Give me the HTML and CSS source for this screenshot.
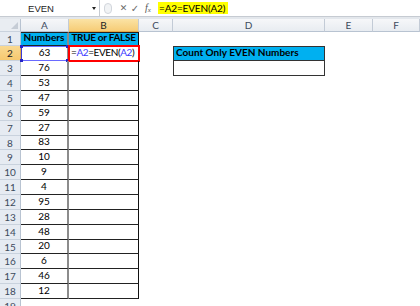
FILE: index.html
```html
<!DOCTYPE html>
<html>
<head>
<meta charset="utf-8">
<link rel="stylesheet" href="styles.css">
</head>
<body>
<div class="fbar">
  <div class="namebox"><span class="nb-text">EVEN</span><span class="nb-arrow"></span></div>
  <div class="fbtns">
    <span class="grip"></span>
    <span class="ico x">✕</span>
    <span class="ico ok">✓</span>
    <span class="ico fx">f<sub>x</sub></span>
  </div>
  <div class="formula"><span class="hl">=A2=EVEN(A2)</span></div>
</div>
<div class="strip"></div>
<div class="sheet">
  <div class="row hdr">
    <div class="rh corner"><span class="tri"></span></div>
    <div class="ch ca">A</div>
    <div class="ch cb sel">B</div>
    <div class="ch cc">C</div>
    <div class="ch cd">D</div>
    <div class="ch ce">E</div>
    <div class="ch cf">F</div>
  </div>
  <div class="row r14">
    <div class="rh">1</div>
    <div class="c ca t th top">Numbers</div>
    <div class="c cb t tb th top">TRUE or FALSE</div>
  </div>
  <div class="row">
    <div class="rh rsel">2</div>
    <div class="c ca t ref">63<i class="h tl"></i><i class="h tr"></i><i class="h bl"></i><i class="h br"></i></div>
    <div class="c cb t tb active"><span class="fm">=<span class="blu">A2</span>=EVEN(<span class="blu">A2</span>)</span></div>
    <div class="c cc"></div>
    <div class="c cd box boxh">Count Only EVEN Numbers</div>
  </div>
  <div class="row">
    <div class="rh">3</div>
    <div class="c ca t">76</div>
    <div class="c cb t tb"></div>
    <div class="c cc"></div>
    <div class="c cd box"></div>
  </div>
  <div class="row"><div class="rh">4</div><div class="c ca t">53</div><div class="c cb t tb"></div></div>
  <div class="row"><div class="rh">5</div><div class="c ca t">47</div><div class="c cb t tb"></div></div>
  <div class="row"><div class="rh">6</div><div class="c ca t">59</div><div class="c cb t tb"></div></div>
  <div class="row"><div class="rh">7</div><div class="c ca t">27</div><div class="c cb t tb"></div></div>
  <div class="row r14"><div class="rh">8</div><div class="c ca t">83</div><div class="c cb t tb"></div></div>
  <div class="row"><div class="rh">9</div><div class="c ca t">10</div><div class="c cb t tb"></div></div>
  <div class="row"><div class="rh">10</div><div class="c ca t">9</div><div class="c cb t tb"></div></div>
  <div class="row"><div class="rh">11</div><div class="c ca t">4</div><div class="c cb t tb"></div></div>
  <div class="row"><div class="rh">12</div><div class="c ca t">95</div><div class="c cb t tb"></div></div>
  <div class="row"><div class="rh">13</div><div class="c ca t">28</div><div class="c cb t tb"></div></div>
  <div class="row"><div class="rh">14</div><div class="c ca t">48</div><div class="c cb t tb"></div></div>
  <div class="row r14"><div class="rh">15</div><div class="c ca t">20</div><div class="c cb t tb"></div></div>
  <div class="row"><div class="rh">16</div><div class="c ca t">6</div><div class="c cb t tb"></div></div>
  <div class="row"><div class="rh">17</div><div class="c ca t">46</div><div class="c cb t tb"></div></div>
  <div class="row"><div class="rh">18</div><div class="c ca t">12</div><div class="c cb t tb"></div></div>
  <div class="row"><div class="rh">19</div><div class="c ca"></div></div>
</div>
</body>
</html>
```
FILE: styles.css
```css
* { box-sizing: border-box; }
html, body { margin: 0; padding: 0; background: #fff; }
body {
  width: 420px; height: 306px; overflow: hidden;
  font-family: Lato, "Liberation Sans", sans-serif;
  font-size: 10px; color: #000;
}
.fbar {
  display: flex; height: 17px; background: #fff;
}
.namebox {
  width: 100px; display: flex; align-items: center; position: relative;
  border-right: 1px solid #c6cbd2; border-bottom: 1px solid #c6cbd2;
}
.nb-text { flex: 1; text-align: center; font-family: "Liberation Sans", sans-serif; font-size: 9.5px; color: #222; padding-right: 10px; }
.nb-arrow {
  width: 0; height: 0; margin-right: 3px;
  border-left: 2.5px solid transparent; border-right: 2.5px solid transparent; border-top: 3px solid #222;
}
.fbtns {
  width: 57px; display: flex; align-items: center; background: #fff;
  border-bottom: 1px solid #c6cbd2;
}
.grip {
  width: 8px; height: 11px; margin-left: 4px; margin-right: 6px;
  border: 1px solid #d2d6dc; border-radius: 5px; background: #f1f3f5;
}
.ico { color: #6b6b6b; font-family: "DejaVu Sans", sans-serif; text-align: center; }
.x { width: 11px; font-size: 9px; }
.ok { width: 12px; font-size: 10px; }
.fx { width: 14px; font-family: "Liberation Serif", serif; font-style: italic; font-size: 10px; color: #555; }
.fx sub { font-size: 7px; vertical-align: -1px; }
.formula {
  flex: 1; display: flex; align-items: center; padding-left: 1px;
  border-bottom: 1px solid #c6cbd2;
}
.hl { background: #ffff00; height: 12px; line-height: 12px; padding: 0 3px 0 1px; font-family: Lato, sans-serif; font-size: 10px; letter-spacing: -0.15px; color: #000; }
.strip { height: 2px; background: #e3e7ec; }
.sheet { display: flex; flex-direction: column; }
.row { display: flex; height: 15px; }
.row.r14 { height: 14px; }
.row.hdr { height: 13px; }
.rh {
  width: 21px; flex: none; display: flex; align-items: center; justify-content: center;
  background: #e6ebf2; color: #3c4a5c; font-size: 10px;
  border-right: 1px solid #b8c3d1; border-bottom: 1px solid #c9d2dd;
}
.rh.rsel { background: linear-gradient(#f9d991, #f6c86f); color: #222; border-right-color: #e1a948; }
.corner { background: #e9edf2; position: relative; }
.tri {
  position: absolute; right: 2px; bottom: 2px; width: 0; height: 0;
  border-left: 7px solid transparent; border-bottom: 7px solid #c5ccd5;
}
.ch {
  flex: none; display: flex; align-items: center; justify-content: center;
  background: linear-gradient(#f6f7f9, #e8ecf1); color: #3c4a5c; font-size: 10px;
  border-right: 1px solid #c3cbd6; border-bottom: 1px solid #b8c3d1;
}
.ch.sel { background: linear-gradient(#fbe3a5, #f6cc76); color: #222; border-bottom-color: #e1a948; }
.ca { width: 48px; flex: none; }
.cb { width: 70px; flex: none; }
.cc { width: 34px; flex: none; }
.cd { width: 152px; flex: none; }
.ce { width: 48px; flex: none; }
.cf { flex: 1; }
.c { display: flex; align-items: flex-end; padding-bottom: 2px; position: relative; white-space: nowrap; }
.t { border-bottom: 1px solid #222; }
.ca.t { justify-content: center; border-right: 2px solid #8c8c8c; }
.tb { border-right: 1px solid #111; padding-left: 1px; }
.top { border-top: 1px solid #222; }
.th { background: #00b0f0; font-weight: bold; }
.cb.th { justify-content: center; padding-left: 0; letter-spacing: -0.3px; }
.ref { border-top: 1px solid #6a6aff; border-bottom: 1px solid #6a6aff; border-left: 1px solid #3b3bd6; }
.h { position: absolute; width: 3px; height: 3px; background: #2323c8; }
.h.tl { left: -2px; top: -2px; }
.h.tr { right: -2px; top: -2px; }
.h.bl { left: -2px; bottom: -2px; }
.h.br { right: -2px; bottom: -2px; }
.active { outline: 2px solid #ff0000; outline-offset: -1px; }
.fm { padding-left: 1px; letter-spacing: -0.4px; }
.blu { color: #3a3aff; }
.box { border-left: 1px solid #333; border-right: 1px solid #333; border-bottom: 1px solid #333; }
.boxh { border-top: 1px solid #333; background: #00b0f0; font-weight: bold; padding-left: 2px; }
```
